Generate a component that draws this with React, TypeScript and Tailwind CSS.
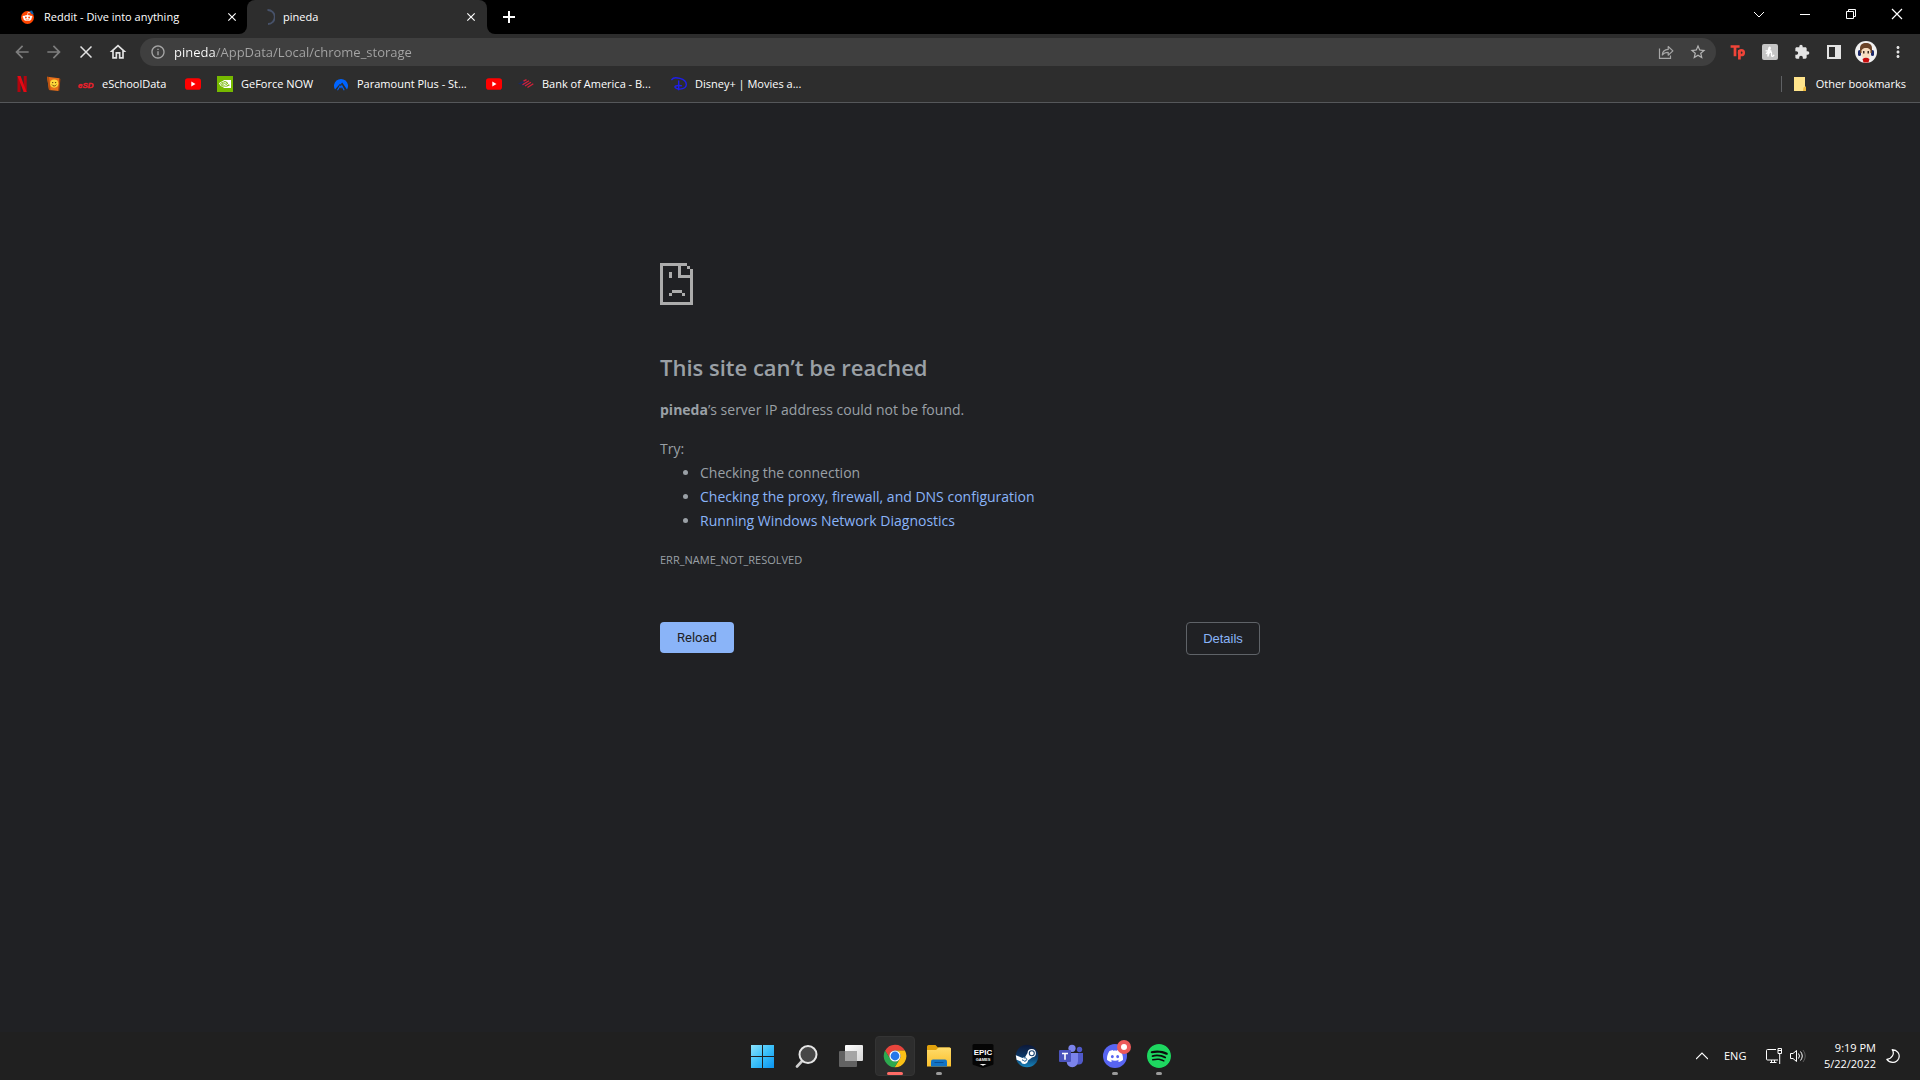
import type { ReactNode } from "react";
import {
  MdArrowBack,
  MdArrowForward,
  MdClose,
  MdExtension,
  MdInfoOutline,
  MdMoreVert,
  MdOutlineHome,
  MdStarBorder,
} from "react-icons/md";
import { SiDiscord, SiNvidia, SiSpotify } from "react-icons/si";

const RedditIcon = () => (
  <svg viewBox="0 0 16 16" className="size-4">
    <circle cx="7.500" cy="8.500" r="6.500" fill="#ff4500" />
    <path d="M9.500 2 12 1.500 14 5.500 11.500 5z" fill="#0b5fae" />
    <ellipse cx="7.500" cy="9" rx="4.200" ry="3" fill="#fff" />
    <circle cx="3.600" cy="7.700" r="1" fill="#fff" />
    <circle cx="11.400" cy="7.700" r="1" fill="#fff" />
    <circle cx="5.900" cy="8.500" r="0.900" fill="#ff4500" />
    <circle cx="9.100" cy="8.500" r="0.900" fill="#ff4500" />
    <path d="M5.800 10.400c1 .8 2.400.8 3.400 0" stroke="#ff4500" strokeWidth="0.700" fill="none" />
    <path d="m7.500 6 .6-2.600 2 .4" stroke="#fff" strokeWidth="0.700" fill="none" />
  </svg>
);

const Spinner = () => (
  <svg viewBox="0 0 16 16" className="size-4">
    <path d="M8.500 1A7 7 0 0 1 9 15" stroke="#47526a" strokeWidth="1.800" fill="none" />
  </svg>
);

const NetflixIcon = () => (
  <svg viewBox="0 0 16 16" className="size-4">
    <path d="M3.500 0h3v16l-3 .3zM9.700 0h3v16.300l-3-.3z" fill="#b1060f" />
    <path d="M3.500 0h3.100l6.100 16.300-3-.3z" fill="#e50914" />
  </svg>
);

const SmileyBookIcon = () => (
  <svg viewBox="0 0 16 16" className="size-4">
    <path d="m1 .8 12.500 1.400-1 12.800L3 14z" fill="#e8701a" />
    <path d="m13.500 2.200.9.8-1 11.400-.9.6z" fill="#a8460c" />
    <path d="m1 .8 2 .3L4.600 14.200 3 14z" fill="#b9500f" />
    <circle cx="8.200" cy="7.600" r="4.100" fill="#ffd93b" />
    <circle cx="6.700" cy="6.600" r="0.700" fill="#5b3208" />
    <circle cx="9.600" cy="6.600" r="0.700" fill="#5b3208" />
    <path d="M6 8.600c1 1.900 3.400 1.900 4.400 0" stroke="#5b3208" strokeWidth="0.800" fill="none" />
  </svg>
);

const EsdIcon = () => (
  <svg viewBox="0 0 16 16" className="size-4">
    <text x="0" y="11.500" fontSize="8" fontWeight="700" fontStyle="italic" fill="#f0202c" stroke="#f0202c" strokeWidth="0.300" fontFamily="Liberation Sans, sans-serif">
      eSD
    </text>
  </svg>
);

const YoutubeIcon = () => (
  <svg viewBox="0 0 16 16" className="size-4">
    <rect x="0" y="2.300" width="16" height="11.400" rx="2.800" fill="#f00" />
    <path d="M6.300 5.600v4.800L10.500 8z" fill="#fff" />
  </svg>
);

const NvidiaIcon = () => (
  <span className="flex size-4 items-center justify-center bg-[#76b900]">
    <SiNvidia className="size-3 text-white" />
  </span>
);

const ParamountIcon = () => (
  <svg viewBox="0 0 16 16" className="size-4">
    <path d="M2 13.500A7 7 0 1 1 14 13.500L9.200 6.500 7.500 8.500 6.800 8z" fill="#0064ff" />
    <path d="M4.500 14.300 7 10l1 1.600.8-1.800 2.400 4.500" stroke="#0064ff" strokeWidth="1.100" fill="none" />
  </svg>
);

const BankIcon = () => (
  <svg viewBox="0 0 16 16" className="size-4">
    <path d="M0 7.500 5 5l1.800.8L2 8.500zM3.400 9.200 7.500 6.300l1.500.6-4 3z" fill="#1b2a5e" />
    <path
      d="m5.500 5.200 3-1.500M4.500 8.700l6.500-4M7 10l6-3.800M9.500 11.500l5.800-3.800"
      stroke="#d4213b"
      strokeWidth="1.300"
    />
  </svg>
);

const DisneyIcon = () => (
  <svg viewBox="0 0 16 16" className="size-4" fill="none" stroke="#1f1fe8" strokeLinecap="round">
    <path d="M.8 3.600C3-.2 15.500 2.500 15.300 8.600c-.2 4.400-6.300 5.300-9.900 3.700-3.200-1.400-.8-3.400 5-2.600" strokeWidth="1.400" />
    <path d="M7.700 5v8.800" strokeWidth="1.400" />
  </svg>
);

const HoneyIcon = () => (
  <svg viewBox="0 0 16 16" className="size-4">
    <rect width="16" height="16" rx="2" fill="#c4c4c4" />
    <path
      d="M4 6.800h5M4.300 9.500C7 8 9 4.200 8 3.200 6.900 2.500 6.200 6 5.900 12.500 6.500 9.500 7.800 7.900 9 8c1.400.2-.1 4 .9 4.400.8.200 1.400-.3 2-1.200"
      stroke="#fff"
      strokeWidth="1.300"
      fill="none"
      strokeLinecap="round"
    />
  </svg>
);

const TpIcon = () => (
  <svg viewBox="0 0 16 16" className="size-4" fill="none" stroke="#f04438" strokeWidth="2.700">
    <path d="M.6 2.500h9M5 2.500v9.800" />
    <path d="M9.400 6v9.500" />
    <circle cx="11.400" cy="8.700" r="2.400" strokeWidth="2.500" />
  </svg>
);

const AvatarIcon = () => (
  <svg viewBox="0 0 22 22" className="size-[22px]">
    <circle cx="11" cy="11" r="11" fill="#f1f1f1" />
    <rect x="3" y="9" width="3" height="6" rx="1.500" fill="#1d2a6b" />
    <rect x="16" y="9" width="3" height="6" rx="1.500" fill="#1d2a6b" />
    <path d="M5 12V7.500C5 3.500 7.500 2 11 2s6 1.500 6 5.500V12z" fill="#6b4429" />
    <path d="M6.500 9.500c1-2 2.500-2.500 4.500-2.500s3.500.5 4.500 2.500V14c0 2-2 3.600-4.500 3.600S6.500 16 6.500 14z" fill="#f7ddc0" />
    <path d="M8 10h1.500v2.500H8zM12.500 10H14v2.500h-1.500z" fill="#3b2b20" />
    <path d="M7.500 18q3.500-2.400 7 0l-1 3.400h-5z" fill="#c80d0d" />
  </svg>
);

const ShareIcon = () => (
  <svg viewBox="0 0 16 16" className="size-4" fill="none" stroke="#a6a6a6" strokeWidth="1.200">
    <path d="M1.500 4.500v9.900h11v-3" />
    <path d="M4.300 11c.2-3.800 2.200-5.400 5.900-5.600V2.500l4.700 4.400-4.700 4.300V8.300C7.600 8.300 5.700 9 4.300 11z" strokeLinejoin="round" />
  </svg>
);

const SidePanelIcon = () => (
  <svg viewBox="0 0 14 14" className="size-3.5">
    <path fillRule="evenodd" d="M0 0h14v14H0zM2 2v10h6V2z" fill="#e3e3e3" />
  </svg>
);

const FolderIcon = () => (
  <svg viewBox="0 0 12 14" className="h-3.5 w-3">
    <path d="M0 0h11v9.500l1 .5v4H0z" fill="#ffe48b" />
    <path d="M9.500 10.500 11 9.500l1 .5v4H9z" fill="#efb93c" />
  </svg>
);

// 11 x 14 grid, one cell is 3px
const SadFileIcon = () => (
  <svg viewBox="0 0 11 14" className="h-[42px] w-[33px]" shapeRendering="crispEdges" aria-hidden="true">
    <path
      fillRule="evenodd"
      fill="#acacac"
      d="M0 0h9v1h1v1h1v12H0zM1 1v12h9V5H6V1zM7 1v3h3V2H9V1zM3 3h1v2H3zM4 9h3.330v1H4zM3 10h1v1H3zM7.330 10h1v1h-1z"
    />
  </svg>
);

const WindowsIcon = () => (
  <svg viewBox="0 0 24 24" className="size-6">
    <defs>
      <linearGradient id="win" x1="0" y1="0" x2="1" y2="1">
        <stop stopColor="#8be3fd" />
        <stop offset="0.500" stopColor="#3ac0fa" />
        <stop offset="1" stopColor="#0a93f0" />
      </linearGradient>
    </defs>
    <path d="M0 1h11v11H0zM12 1h11v11H12zM0 13h11v11H0zM12 13h11v11H12z" fill="url(#win)" />
  </svg>
);

const SearchIcon = () => (
  <svg viewBox="0 0 24 24" className="size-6">
    <path d="m8 16-6 6.500" stroke="#cfcfcf" strokeWidth="2.600" strokeLinecap="round" />
    <circle cx="13" cy="10.500" r="8.500" fill="#474747" stroke="#e6e6e6" strokeWidth="2" />
  </svg>
);

const TaskViewIcon = () => (
  <svg viewBox="0 0 24 24" className="size-6">
    <defs>
      <linearGradient id="tv" x1="0" y1="0" x2="1" y2="1">
        <stop stopColor="#fff" />
        <stop offset="1" stopColor="#d6d6d6" />
      </linearGradient>
    </defs>
    <rect x="0" y="7" width="18" height="16" rx="1" fill="#626262" />
    <rect x="6" y="1" width="18" height="16" rx="1" fill="url(#tv)" />
    <path d="M6 7h12v10H6z" fill="#a5a5a5" />
  </svg>
);

const ChromeIcon = () => (
  <svg viewBox="0 0 24 24" className="size-6">
    <path d="M2.070 6.800A11.300 11.300 0 0 1 21.900 6.500H12A5.600 5.600 0 0 0 7.150 14.800z" fill="#e8453c" />
    <path d="M21.900 6.500A11.300 11.300 0 0 1 11.600 23.300L16.850 14.800A5.600 5.600 0 0 0 12 6.400z" fill="#fbc116" />
    <path d="M11.600 23.300A11.300 11.300 0 0 1 2.070 6.600l5.080 8.200a5.600 5.600 0 0 0 9.700 0z" fill="#2da94f" />
    <circle cx="12" cy="12" r="5.600" fill="#fff" />
    <circle cx="12" cy="12" r="4.400" fill="#2678ea" />
  </svg>
);

const ExplorerIcon = () => (
  <svg viewBox="0 0 24 24" className="size-6">
    <defs>
      <linearGradient id="fe" x1="0" y1="0" x2="0" y2="1">
        <stop stopColor="#ffdc6b" />
        <stop offset="1" stopColor="#fbc02d" />
      </linearGradient>
    </defs>
    <path d="M0 2.500Q0 1 1.500 1h7L11 3.500h11.500q1.500 0 1.500 1.500v6H0z" fill="#e2a20c" />
    <path d="M0 6h9l2.500-2.500H22.500q1.500 0 1.500 1.500v17.500H0z" fill="url(#fe)" />
    <path d="M4 22.500V17.500Q4 15.500 6 15.500h12q2 0 2 2v5z" fill="#1273c4" />
    <path d="M7.500 18.500h9" stroke="#0a4f91" strokeWidth="1" />
  </svg>
);

const EpicIcon = () => (
  <svg viewBox="0 0 24 24" className="size-6">
    <path d="M1.500 1.500Q1.500 0 3 0h18q1.500 0 1.500 1.500v18q0 1-1 1.500L12 24l-9.500-3q-1-.5-1-1.500z" fill="#050505" />
    <text x="12" y="11" textAnchor="middle" fontSize="8" fontWeight="700" fill="#fff" fontFamily="Liberation Sans, sans-serif">
      EPIC
    </text>
    <text x="12" y="17" textAnchor="middle" fontSize="4" fontWeight="700" fill="#f2f2f2" fontFamily="Liberation Sans, sans-serif">
      GAMES
    </text>
    <path d="M8.500 20h7L12 21.700z" fill="#f2f2f2" />
  </svg>
);

const SteamIcon = () => (
  <svg viewBox="0 0 24 24" className="size-6">
    <defs>
      <linearGradient id="st" x1="0" y1="0" x2="0" y2="1">
        <stop stopColor="#0d1838" />
        <stop offset="0.500" stopColor="#0c3765" />
        <stop offset="1" stopColor="#1785bd" />
      </linearGradient>
    </defs>
    <circle cx="12" cy="12" r="11.300" fill="url(#st)" />
    <path d="M.8 11.200 7.500 14q1.500-1 2.500-.7l2.500-4.200a4.200 4.200 0 1 1 4.500 4.300L13 16.600a3.700 3.700 0 0 1-7.200.9L1.600 15.700z" fill="#fff" />
    <circle cx="16.800" cy="9.200" r="2.500" fill="#fff" stroke="#14406f" strokeWidth="1.100" />
    <path d="m7 15.800 1.600.7a1.700 1.700 0 1 0 .3-2.400" stroke="#14558a" strokeWidth="1" fill="none" />
  </svg>
);

const TeamsIcon = () => (
  <svg viewBox="0 0 24 24" className="size-6">
    <circle cx="20.500" cy="5.500" r="2.700" fill="#5059c9" />
    <path d="M17 9h7v8q-1 3.500-4 3.500H17z" fill="#5059c9" />
    <circle cx="13" cy="4.300" r="3.600" fill="#7b83eb" />
    <path d="M7.500 9H19v8q-.5 6-5.750 6.300Q8 23 7.500 17z" fill="#7b83eb" />
    <rect x="0" y="6" width="12" height="12" rx="1" fill="#4b53bc" />
    <path d="M3 8.700h6v1.500H6.800v5.500H5.200v-5.500H3z" fill="#fff" />
  </svg>
);

const DiscordIcon = () => (
  <span className="relative flex size-6 items-center justify-center rounded-full bg-[#5865f2]">
    <SiDiscord className="size-4 text-white" />
    <span className="absolute -top-1 -right-1 flex size-3.5 items-center justify-center rounded-full bg-[#ed5a5a]">
      <span className="size-1.5 rounded-full bg-white" />
    </span>
  </span>
);

const SpotifyIcon = () => (
  <span className="block rounded-full bg-[#0c0c0c]">
    <SiSpotify className="size-6 text-[#1ed760]" />
  </span>
);

const bookmarks: { name: string; label?: string; width?: string; icon: ReactNode }[] = [
  { name: "Netflix", icon: <NetflixIcon /> },
  { name: "Pixton", icon: <SmileyBookIcon /> },
  { name: "eSchoolData", label: "eSchoolData", width: "min-w-[67px]", icon: <EsdIcon /> },
  { name: "YouTube", icon: <YoutubeIcon /> },
  { name: "GeForce NOW", label: "GeForce NOW", width: "min-w-[76px]", icon: <NvidiaIcon /> },
  { name: "Paramount Plus", label: "Paramount Plus - St...", width: "min-w-[113px]", icon: <ParamountIcon /> },
  { name: "YouTube", icon: <YoutubeIcon /> },
  { name: "Bank of America", label: "Bank of America - B...", width: "min-w-[113px]", icon: <BankIcon /> },
  { name: "Disney+", label: "Disney+ | Movies a...", width: "min-w-[113px]", icon: <DisneyIcon /> },
];

const apps: { name: string; icon: ReactNode; running?: boolean; active?: boolean }[] = [
  { name: "Start", icon: <WindowsIcon /> },
  { name: "Search", icon: <SearchIcon /> },
  { name: "Task View", icon: <TaskViewIcon /> },
  { name: "Google Chrome", icon: <ChromeIcon />, active: true },
  { name: "File Explorer", icon: <ExplorerIcon />, running: true },
  { name: "Epic Games", icon: <EpicIcon /> },
  { name: "Steam", icon: <SteamIcon /> },
  { name: "Microsoft Teams", icon: <TeamsIcon /> },
  { name: "Discord", icon: <DiscordIcon />, running: true },
  { name: "Spotify", icon: <SpotifyIcon />, running: true },
];

const ToolButton = ({ label, children }: { label: string; children: ReactNode }) => (
  <button type="button" aria-label={label} className="flex size-7 shrink-0 items-center justify-center rounded-full">
    {children}
  </button>
);

const WindowButton = ({ label, children }: { label: string; children: ReactNode }) => (
  <button type="button" aria-label={label} className="flex h-7 w-[46px] items-center justify-center">
    <svg viewBox="0 0 10 10" className="size-2.5 overflow-visible" fill="none" stroke="#fff">
      {children}
    </svg>
  </button>
);

const TabStrip = () => (
  <header className="flex h-[34px] bg-[#2d2d2d] text-[11px] font-medium text-white">
    <div className="flex w-[247px] items-center rounded-br-lg bg-black pr-[7px] pl-5">
      <RedditIcon />
      <span className="ml-2 flex-1 truncate">Reddit - Dive into anything</span>
      <button type="button" aria-label="Close tab" className="flex size-4 items-center justify-center">
        <MdClose className="size-3.5" />
      </button>
    </div>
    <div className="flex w-60 bg-black">
      <div className="flex flex-1 items-center rounded-t-lg bg-[#2d2d2d] pr-2 pl-3">
        <Spinner />
        <span className="ml-2 flex-1 truncate">pineda</span>
        <button type="button" aria-label="Close tab" className="flex size-4 items-center justify-center">
          <MdClose className="size-3.5" />
        </button>
      </div>
    </div>
    <div className="flex flex-1 items-start rounded-bl-lg bg-black pl-2">
      <button type="button" aria-label="New tab" className="flex h-[34px] w-7 items-center justify-center">
        <svg viewBox="0 0 12 12" className="size-3" stroke="#fff" strokeWidth="2">
          <path d="M6 0v12M0 6h12" />
        </svg>
      </button>
      <div className="ml-auto flex">
        <WindowButton label="Search tabs">
          <path d="m0 3 5 5 5-5" />
        </WindowButton>
        <WindowButton label="Minimize">
          <path d="M0 5.500h10" />
        </WindowButton>
        <WindowButton label="Restore">
          <path d="M.5 2.500h7v7h-7zM2.500 2.500v-2h7v7h-2" />
        </WindowButton>
        <WindowButton label="Close">
          <path d="m0 0 10 10M10 0 0 10" strokeWidth="1.200" />
        </WindowButton>
      </div>
    </div>
  </header>
);

const Toolbar = () => (
  <div className="flex h-9 items-center gap-1 bg-[#2d2d2d] px-2">
    <ToolButton label="Back">
      <MdArrowBack className="size-5 text-[#7d7d7d]" />
    </ToolButton>
    <ToolButton label="Forward">
      <MdArrowForward className="size-5 text-[#7d7d7d]" />
    </ToolButton>
    <ToolButton label="Stop">
      <svg viewBox="0 0 12 12" className="size-3" stroke="#e3e3e3" strokeWidth="1.500">
        <path d="m.5.5 11 11M11.500.5l-11 11" />
      </svg>
    </ToolButton>
    <ToolButton label="Home">
      <MdOutlineHome className="size-5 text-[#e3e3e3]" />
    </ToolButton>
    <div className="mx-1 flex h-7 flex-1 items-center gap-1 rounded-full bg-[#3f3f3f] pr-1 pl-2.5">
      <MdInfoOutline className="size-4 shrink-0 text-[#a6a6a6]" />
      <input
        type="text"
        aria-label="Address"
        defaultValue="pineda/AppData/Local/chrome_storage"
        className="ml-1 min-w-0 flex-1 bg-linear-to-r from-white from-[42px] to-[#a6a6a6] to-[42px] bg-clip-text text-[13px] leading-6 text-transparent outline-none"
      />
      <ToolButton label="Share">
        <ShareIcon />
      </ToolButton>
      <ToolButton label="Bookmark this tab">
        <MdStarBorder className="size-[18px] text-[#b5b5b5]" />
      </ToolButton>
    </div>
    <ToolButton label="Toolkit extension">
      <TpIcon />
    </ToolButton>
    <ToolButton label="Honey">
      <HoneyIcon />
    </ToolButton>
    <ToolButton label="Extensions">
      <MdExtension className="size-4 text-[#e3e3e3]" />
    </ToolButton>
    <ToolButton label="Side panel">
      <SidePanelIcon />
    </ToolButton>
    <ToolButton label="Profile">
      <AvatarIcon />
    </ToolButton>
    <ToolButton label="Menu">
      <MdMoreVert className="size-[18px] text-[#e3e3e3]" />
    </ToolButton>
  </div>
);

const BookmarksBar = () => (
  <nav className="flex h-[33px] items-center gap-4 border-b border-[#55575a] bg-[#2d2d2d] px-3.5 pb-1 text-[11px] font-medium text-white">
    {bookmarks.map((b, i) => (
      <a key={i} href="#" aria-label={b.name} className="flex shrink-0 items-center gap-2">
        {b.icon}
        {b.label && <span className={b.width}>{b.label}</span>}
      </a>
    ))}
    <div className="ml-auto flex items-center gap-3">
      <span className="h-4 w-px bg-[#5f6164]" />
      <button type="button" className="flex items-center gap-2.5">
        <FolderIcon />
        Other bookmarks
      </button>
    </div>
  </nav>
);

const ErrorPage = () => (
  <main className="flex-1 bg-[#202124] pt-40 pb-16 text-sm leading-6 text-[#9aa0a6]">
    <div className="mx-auto max-w-[600px]">
      <SadFileIcon />
      <h1 className="mt-12 text-[22px] leading-7 font-semibold">This site can’t be reached</h1>
      <p className="mt-[17px]">
        <strong className="font-bold">pineda</strong>’s server IP address could not be found.
      </p>
      <p className="mt-[15px]">Try:</p>
      <ul className="list-disc pl-10">
        <li>Checking the connection</li>
        <li>
          <a href="#" className="text-[#8ab4f8]">Checking the proxy, firewall, and DNS configuration</a>
        </li>
        <li>
          <a href="#" className="text-[#8ab4f8]">Running Windows Network Diagnostics</a>
        </li>
      </ul>
      <p className="mt-[17px] text-[11px] leading-5">ERR_NAME_NOT_RESOLVED</p>
      <div className="mt-[52px] flex items-start justify-between">
        <button type="button" className="h-[31px] w-[74px] rounded bg-[#8ab4f8] font-[Roboto,sans-serif] text-[13px] text-[#202124]">
          Reload
        </button>
        <button type="button" className="h-[33px] w-[74px] rounded border border-[#5f6368] font-['Liberation_Sans',sans-serif] text-[13px] text-[#8ab4f8]">
          Details
        </button>
      </div>
    </div>
  </main>
);

const Taskbar = () => (
  <footer className="grid h-12 grid-cols-[1fr_auto_1fr] items-center bg-[#202020] text-[11px] font-medium text-white">
    <div />
    <div className="flex gap-1 pl-0.5">
      {apps.map((app) => (
        <button
          key={app.name}
          type="button"
          aria-label={app.name}
          className={
            app.active
              ? "relative flex size-10 items-center justify-center rounded border border-[#343434] bg-[#2d2d2d]"
              : "relative flex size-10 items-center justify-center rounded"
          }
        >
          {app.icon}
          {app.active && <span className="absolute inset-x-0 bottom-0 mx-auto h-[3px] w-4 rounded-full bg-[#ff6b66]" />}
          {app.running && <span className="absolute inset-x-0 bottom-px mx-auto h-[3px] w-1.5 rounded-full bg-[#9a9a9a]" />}
        </button>
      ))}
    </div>
    <div className="flex items-center justify-end pr-5">
      <button type="button" aria-label="Show hidden icons" className="flex w-6 justify-center">
        <svg viewBox="0 0 12 12" className="size-3" fill="none" stroke="#fff" strokeWidth="1.200">
          <path d="m0 9 6-6 6 6" />
        </svg>
      </button>
      <button type="button" className="ml-2.5 w-[34px] text-left">ENG</button>
      <button type="button" aria-label="Network and volume" className="ml-2 flex gap-2">
        <svg viewBox="0 0 16 16" className="size-4" fill="none" stroke="#fff">
          <path d="M10 1.500H1.500q-1 0-1 1v8.500q0 1 1 1h10.500M4 14.500h6.500M5.500 12v2.500M8.500 12v2.500" />
          <path d="M12 .5h3.500v5H12zM13.700 5.500v10.500M12 2.500h3.500" />
        </svg>
        <svg viewBox="0 0 16 16" className="size-4" fill="none" stroke="#fff">
          <path d="M.5 5.500v5h2.500l3.500 3V2.500L3 5.500z" />
          <path d="M8.500 5.500q2 2.500 0 5M10.500 3.500q3.500 4.500 0 9" />
          <path d="M13 2q4.500 6 0 12" stroke="#5a5a5a" />
        </svg>
      </button>
      <button type="button" className="ml-2 w-[62px] text-right leading-4">
        9:19 PM
        <br />
        5/22/2022
      </button>
      <button type="button" aria-label="Focus assist" className="ml-2.5">
        <svg viewBox="0 0 14 14" className="size-3.5" fill="none" stroke="#fff" strokeWidth="1.200">
          <path d="M6.200.700C9 4.500 6 10 .8 10.300 4 14.500 10.500 14.500 12.700 9.500 14.500 5 11 .800 6.200.700z" strokeLinejoin="round" />
        </svg>
      </button>
    </div>
  </footer>
);

const App = () => (
  <div className="flex min-h-screen flex-col bg-[#202124] font-['Open_Sans','Noto_Sans',sans-serif]">
    <TabStrip />
    <Toolbar />
    <BookmarksBar />
    <ErrorPage />
    <Taskbar />
  </div>
);

export default App;
